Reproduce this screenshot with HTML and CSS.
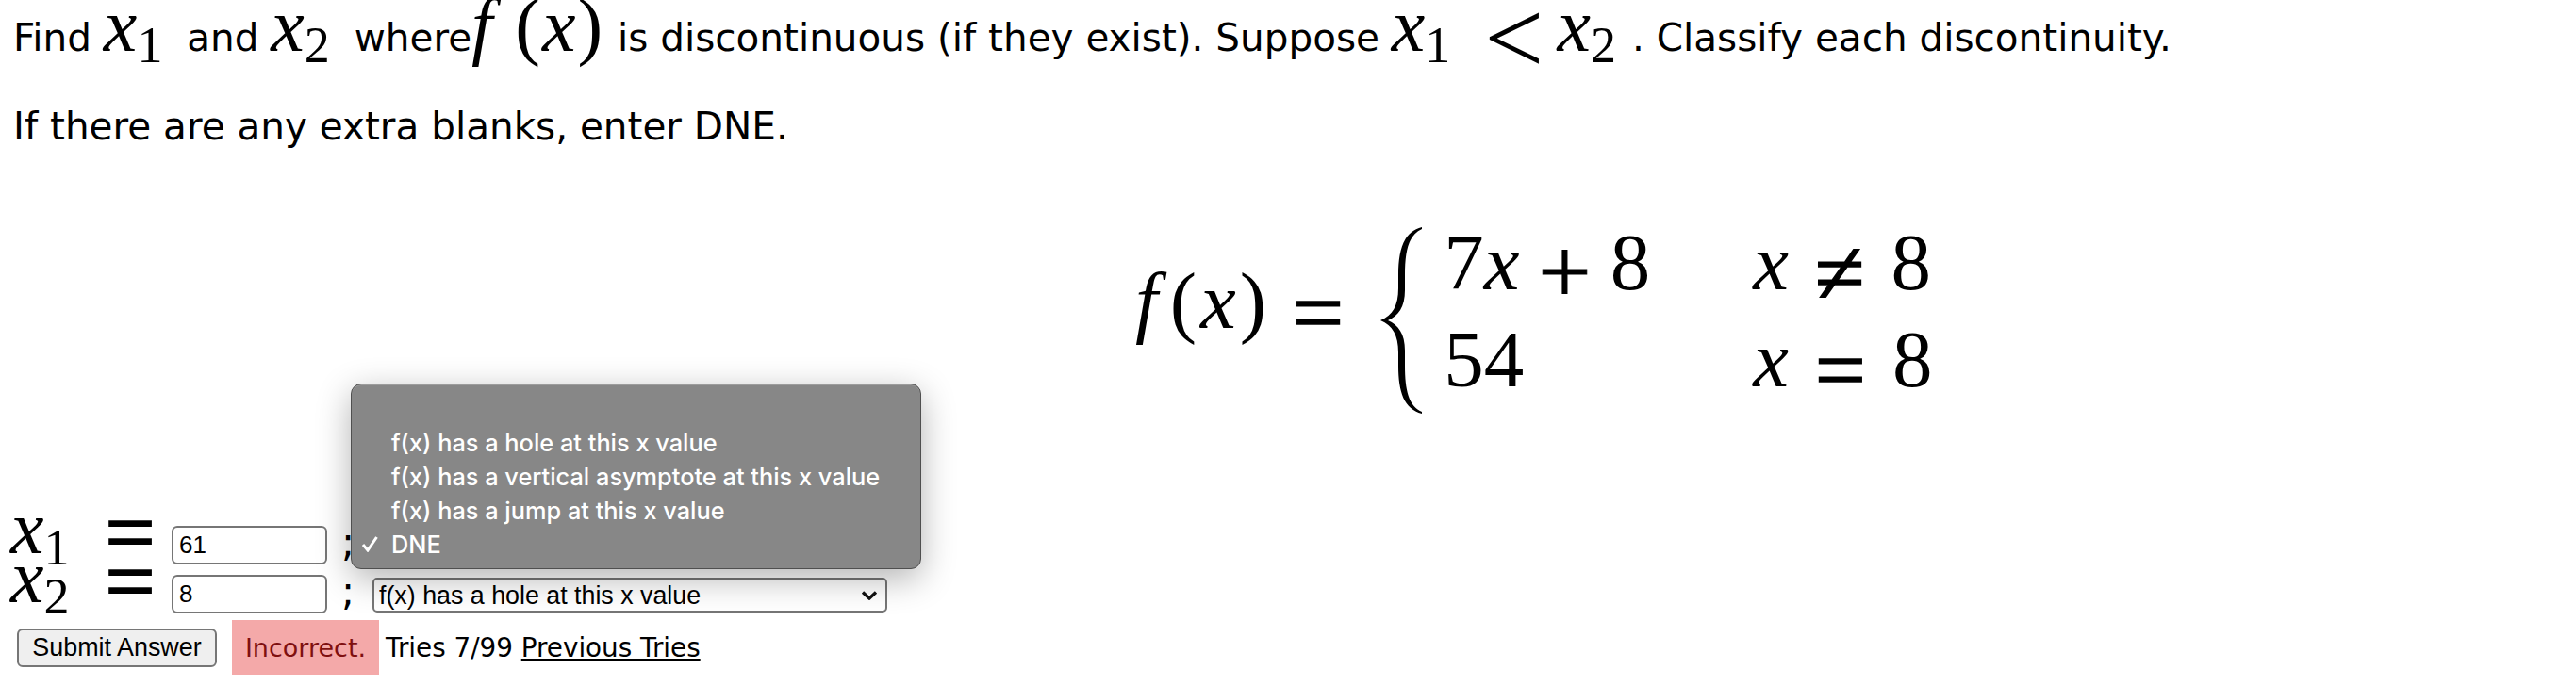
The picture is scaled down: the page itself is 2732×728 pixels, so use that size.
FILE: index.html
```html
<!DOCTYPE html>
<html lang="en">
<head>
<meta charset="utf-8">
<title>Discontinuity question</title>
<link rel="stylesheet" href="styles.css">
</head>
<body>
<main class="page">
  <p class="prompt first">Find <span class="m"><i>x</i><sub>1</sub></span> and <span class="m"><i>x</i><sub>2</sub></span> where<span class="m fx"><i class="f">f</i>(<i class="x">x</i>)</span> is discontinuous (if they exist). Suppose <span class="m"><i>x</i><sub>1</sub></span><span class="m lt">&lt;</span><span class="m tight"><i>x</i><sub>2</sub></span>. Classify each discontinuity.</p>
  <p class="prompt second">If there are any extra blanks, enter DNE.</p>

  <section class="display">
    <div class="lhs"><i class="f">f</i>(<i class="x">x</i>)<span class="eq">=</span></div>
    <svg class="brace" viewBox="0 0 46 200" preserveAspectRatio="none" aria-hidden="true"><path d="M45 1C26 6 20 24 20 52L20 66C20 84 14 95 1 100C14 105 20 116 20 134L20 148C20 176 26 194 45 199L45 197C31 191 27 174 27 148L27 132C27 114 20 105 9 100C20 95 27 86 27 68L27 52C27 26 31 9 45 3Z"/></svg>
    <div class="cases">
      <div class="val">7<i>x</i><span class="plus">+</span>8</div>
      <div class="cond"><i>x</i><span class="rel">≠</span>8</div>
      <div class="val">54</div>
      <div class="cond"><i>x</i><span class="rel">=</span>8</div>
    </div>
  </section>

  <form class="answers">
    <div class="row row-one">
      <span class="label"><i>x</i><sub>1</sub><span class="rel">=</span></span>
      <input class="num" type="text" value="61">
      <span class="semi">;</span>
      <select class="kind"><option>DNE</option></select>
    </div>
    <div class="row row-two">
      <span class="label"><i>x</i><sub>2</sub><span class="rel">=</span></span>
      <input class="num" type="text" value="8">
      <span class="semi">;</span>
      <select class="kind"><option>f(x) has a hole at this x value</option></select>
    </div>
    <div class="submit-row">
      <button class="submit" type="button">Submit Answer</button>
      <span class="status">Incorrect.</span>
      <span class="tries">Tries 7/99 <a href="#">Previous Tries</a></span>
    </div>
  </form>

  <ul class="popup">
    <li>f(x) has a hole at this x value</li>
    <li>f(x) has a vertical asymptote at this x value</li>
    <li>f(x) has a jump at this x value</li>
    <li class="checked"><svg class="tick" viewBox="0 0 20 18" aria-hidden="true"><path d="M3 10L8 16L17.5 2"/></svg>DNE</li>
  </ul>
</main>
</body>
</html>
```

FILE: styles.css
```css
* { box-sizing: border-box; }
html, body { margin: 0; padding: 0; background: #fff; }
.page {
  position: relative;
  width: 2732px;
  height: 728px;
  overflow: hidden;
  color: #000;
  font-family: "DejaVu Sans", Verdana, sans-serif;
}
.prompt {
  margin: 0;
  padding-left: 14px;
  font-size: 40.5px;
  white-space: nowrap;
}
.first { height: 94px; padding-top: 20px; line-height: 40px; }
.second { height: 60px; padding-top: 17px; line-height: 46px; }
.m {
  font-family: "Liberation Serif", "Times New Roman", serif;
  font-size: 80px;
  line-height: 0;
  margin: 0 13px 0 0;
}
.m sub {
  font-size: 54px;
  line-height: 0;
  vertical-align: -12px;
}
.fx { margin: 0 3px 0 0; }
.fx .f { margin-right: 24px; }
.fx .x { margin: 0 2px; }
.lt {
  margin: 0 14px 0 23px;
  font-size: 112px;
  vertical-align: -24px;
}
.tight { margin: 0 17px 0 0; }

.display {
  display: flex;
  align-items: center;
  height: 204px;
  margin-top: 84px;
  padding-left: 1204px;
  font-family: "Liberation Serif", "Times New Roman", serif;
  font-size: 85px;
}
.lhs { margin-bottom: 24px; white-space: nowrap; }
.lhs .f { margin-right: 13px; }
.lhs .x { margin: 0 4px; }
.eq {
  margin-left: 28px;
  font-size: 96px;
  vertical-align: -16px;
  -webkit-text-stroke: 1.5px #000;
}
.brace { width: 46px; height: 200px; margin-left: 38px; flex: none; }
.cases {
  display: grid;
  grid-template-columns: 328px auto;
  grid-auto-rows: 103px;
  margin: 0 0 20px 22px;
  line-height: 103px;
  white-space: nowrap;
}
.plus {
  margin: 0 20px;
  font-size: 100px;
  vertical-align: -15px;
  -webkit-text-stroke: 1px #000;
}
.rel {
  margin: 0 28px;
  font-size: 96px;
  vertical-align: -15px;
  -webkit-text-stroke: 1.5px #000;
}

.answers {
  position: absolute;
  left: 0;
  top: 540px;
  width: 1000px;
}
.row {
  display: flex;
  align-items: flex-start;
  height: 52px;
}
.row-one { padding-top: 18px; height: 70px; }
.row-two { height: 48px; }
.label {
  width: 182px;
  margin-top: -18px;
  padding-left: 11px;
  font-family: "Liberation Serif", "Times New Roman", serif;
  font-size: 80px;
  font-style: normal;
  line-height: 40px;
  white-space: nowrap;
}
.label sub { font-size: 54px; line-height: 0; vertical-align: -12px; }
.label .rel {
  margin: 0 0 0 38px;
  font-size: 94px;
  vertical-align: -9px;
  -webkit-text-stroke: 2px #000;
}
.num {
  width: 165px;
  height: 41px;
  padding: 0 6px;
  border: 2px solid #767676;
  border-radius: 6px;
  background: #fff;
  color: #000;
  font: 26px "Liberation Sans", Arial, sans-serif;
}
.semi {
  width: 48px;
  margin-top: -2px;
  padding-left: 15px;
  font-size: 42px;
  line-height: 40px;
}
.kind {
  width: 546px;
  height: 37px;
  margin-top: 3px;
  padding: 0 5px;
  appearance: none;
  -webkit-appearance: none;
  border: 2px solid #767676;
  border-radius: 5px;
  background: #fff url("data:image/svg+xml,%3Csvg xmlns='http://www.w3.org/2000/svg' width='18' height='10' viewBox='0 0 18 10'%3E%3Cpath d='M2 1.5L9 8L16 1.5' fill='none' stroke='%23111' stroke-width='3.4'/%3E%3C/svg%3E") no-repeat right 8px center;
  color: #000;
  font: 26.8px "Liberation Sans", Arial, sans-serif;
}
.submit-row {
  display: flex;
  align-items: center;
  height: 58px;
  padding-left: 18px;
}
.submit {
  width: 212px;
  height: 41px;
  padding: 0;
  border: 2px solid #767676;
  border-radius: 6px;
  background: #efefef;
  color: #000;
  font: 26.9px "Liberation Sans", Arial, sans-serif;
}
.status {
  display: flex;
  align-items: center;
  justify-content: center;
  width: 156px;
  height: 58px;
  margin-left: 16px;
  background: #f4a9a9;
  color: #7f1010;
  font-size: 27px;
}
.tries { margin-left: 7px; font-size: 27.8px; white-space: nowrap; }
.tries a { color: #000; text-decoration: underline; }

.popup {
  position: absolute;
  left: 372px;
  top: 407px;
  width: 605px;
  height: 197px;
  margin: 0;
  padding: 44px 0 0 42px;
  list-style: none;
  background: #878787;
  border: 1px solid #4f4f4f;
  border-radius: 11px;
  box-shadow: inset 0 1px 0 rgba(255, 255, 255, 0.18), 0 10px 36px rgba(0, 0, 0, 0.3);
  color: #fff;
  font: 500 25.35px/36px Inter, "Noto Sans", sans-serif;
  white-space: nowrap;
}
.popup li { position: relative; }
.tick {
  position: absolute;
  left: -33px;
  top: 8px;
  width: 20px;
  height: 18px;
  fill: none;
  stroke: #fff;
  stroke-width: 3;
}
```
